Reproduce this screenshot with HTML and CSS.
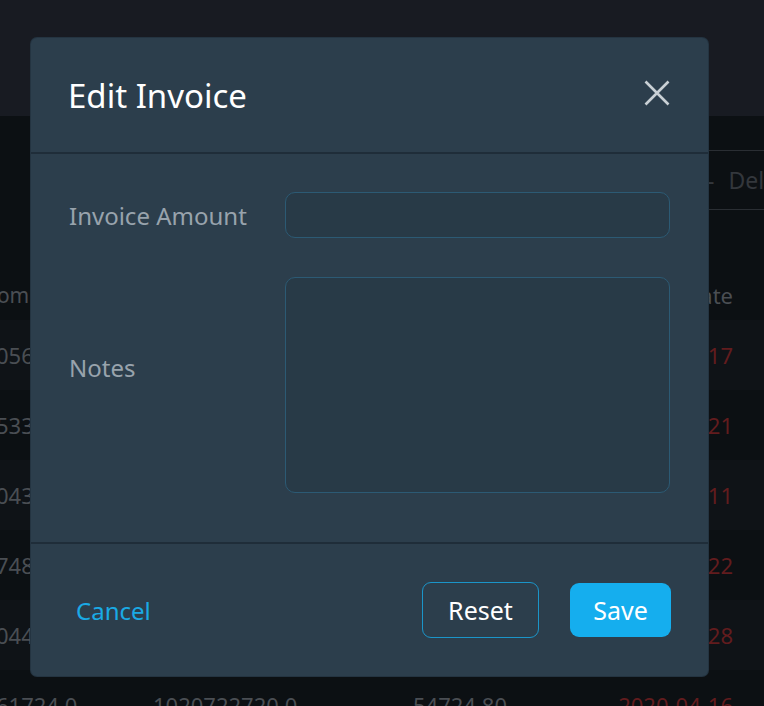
FILE: index.html
```html
<!DOCTYPE html>
<html lang="en">
<head>
    <meta charset="UTF-8">
    <title>Invoices</title>
    <link rel="stylesheet" href="styles.css">
</head>
<body>
    <div class="top-bar"></div>

    <div class="page">
        <div class="toolbar">
            <button class="delete-button"><span class="minus">-</span> Delete</button>
        </div>

        <div class="invoice-table">
            <div class="row head">
                <div class="c1 customer">Customer</div>
                <div class="c2">Invoice No</div>
                <div class="c3">Amount</div>
                <div class="c4">Due Date</div>
            </div>
            <div class="row">
                <div class="c1">05617.0</div>
                <div class="c2">1020717170.0</div>
                <div class="c3">50561.70</div>
                <div class="c4 late">2020-04-17</div>
            </div>
            <div class="row">
                <div class="c1">53321.0</div>
                <div class="c2">1020721210.0</div>
                <div class="c3">53321.40</div>
                <div class="c4 late">2020-04-21</div>
            </div>
            <div class="row">
                <div class="c1">04311.0</div>
                <div class="c2">1020711110.0</div>
                <div class="c3">40431.10</div>
                <div class="c4 late">2020-04-11</div>
            </div>
            <div class="row">
                <div class="c1">74822.0</div>
                <div class="c2">1020722220.0</div>
                <div class="c3">74822.60</div>
                <div class="c4 late">2020-04-22</div>
            </div>
            <div class="row">
                <div class="c1">04428.0</div>
                <div class="c2">1020728280.0</div>
                <div class="c3">90442.80</div>
                <div class="c4 late">2020-04-28</div>
            </div>
            <div class="row">
                <div class="c1">61724.0</div>
                <div class="c2">1020722720.0</div>
                <div class="c3">54724.80</div>
                <div class="c4 late">2020-04-16</div>
            </div>
        </div>
    </div>

    <!-- Edit dialog -->
    <div class="modal">
        <div class="modal-header">
            <h1>Edit Invoice</h1>
            <button class="close-button" aria-label="Close">
                <svg width="26" height="26" viewBox="0 0 26 26">
                    <path d="M1.5 1.5 L24.5 24.5 M24.5 1.5 L1.5 24.5" stroke="#c9d0d5" stroke-width="2.6" fill="none"/>
                </svg>
            </button>
        </div>

        <div class="modal-body">
            <label class="field-label" for="amount">Invoice Amount</label>
            <input class="field-input" type="text" id="amount">

            <label class="field-label notes-label" for="notes">Notes</label>
            <textarea class="field-input notes" id="notes"></textarea>
        </div>

        <div class="modal-footer">
            <a href="#" class="cancel-link">Cancel</a>
            <div class="actions">
                <button class="reset-button">Reset</button>
                <button class="save-button">Save</button>
            </div>
        </div>
    </div>
</body>
</html>
```
FILE: styles.css
```css
body {
    margin: 0;
    background: #0c1013;
    font-family: "Noto Sans", "Open Sans", sans-serif;
    overflow: hidden;
    height: 706px;
}

.top-bar {
    height: 116px;
    background: #181b22;
}

.toolbar {
    display: flex;
    justify-content: flex-end;
    padding: 34px 0 0;
    height: 120px;
    box-sizing: border-box;
}

.delete-button {
    background: none;
    border: 1px solid #2a2e33;
    border-right: none;
    color: #33373c;
    font-family: inherit;
    font-size: 23px;
    height: 60px;
    width: 58px;
    padding: 0;
    text-align: left;
    white-space: nowrap;
    overflow: hidden;
}

.delete-button .minus {
    margin-right: 8px;
}

.invoice-table {
    margin-left: -4px;
    margin-top: 34px;
}

.row {
    display: grid;
    grid-template-columns: 157px 260px 205px 115px;
    height: 70px;
    align-items: center;
    font-size: 22px;
    color: #4a4e53;
    white-space: nowrap;
}

.row:nth-child(even) {
    background: #0f1317;
}

.row.head {
    height: 50px;
    background: #0c1013;
}

.row .customer {
    text-indent: -43px;
    font-size: 21px;
}

.row .c4 {
    text-align: right;
}

.row .late {
    color: #621c1e;
}

/* modal */
.modal {
    position: absolute;
    left: 31px;
    top: 38px;
    width: 677px;
    height: 638px;
    background: #2c3e4c;
    border-radius: 6px;
    display: flex;
    flex-direction: column;
    box-shadow: 0 0 0 1px #243441;
}

.modal-header {
    display: flex;
    align-items: center;
    justify-content: space-between;
    height: 114px;
    padding: 0 38px 0 37px;
    border-bottom: 2px solid #1f2d39;
}

.modal-header h1 {
    margin: 0;
    font-size: 33px;
    font-weight: normal;
    color: #ffffff;
}

.close-button {
    background: none;
    border: none;
    padding: 0;
    display: flex;
    margin-top: -4px;
}

.modal-body {
    display: grid;
    grid-template-columns: 216px 1fr;
    row-gap: 39px;
    padding: 38px 38px 49px 38px;
    border-bottom: 2px solid #1f2d39;
}

.field-label {
    align-self: center;
    color: #98a3ac;
    font-size: 24px;
}

.notes-label {
    margin-bottom: 36px;
}

.field-input {
    background: #283a47;
    border: 1px solid #2c5a74;
    border-radius: 10px;
    height: 46px;
    box-sizing: border-box;
    color: #fff;
    font-family: inherit;
    font-size: 18px;
    padding: 0 14px;
}

.field-input.notes {
    height: 216px;
    resize: none;
}

.modal-footer {
    flex: 1;
    display: flex;
    align-items: center;
    justify-content: space-between;
    padding: 0 37px 0 45px;
}

.cancel-link {
    color: #1aaae5;
    text-decoration: none;
    font-size: 24px;
}

.actions {
    display: flex;
    gap: 31px;
    align-items: center;
}

.reset-button,
.save-button {
    font-family: inherit;
    font-size: 25px;
    color: #ffffff;
    border-radius: 9px;
    height: 56px;
    cursor: pointer;
}

.reset-button {
    background: transparent;
    border: 1px solid #1b95c9;
    width: 117px;
}

.save-button {
    background: #15aeee;
    border: none;
    width: 101px;
    height: 54px;
}
```
